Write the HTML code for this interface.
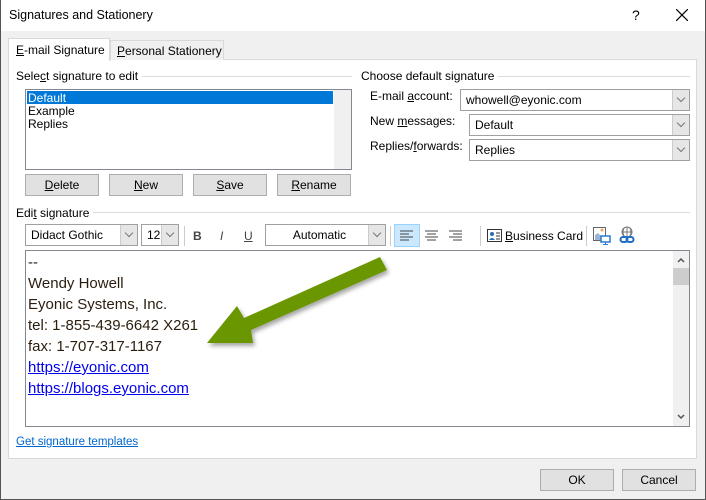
<!DOCTYPE html>
<html><head><meta charset="utf-8"><style>
*{box-sizing:border-box;margin:0;padding:0}
body{width:706px;height:500px;overflow:hidden;background:#f0f0f0;font-family:"Liberation Sans",sans-serif;font-size:12px;color:#000;position:relative}
.a{position:absolute}
.win{left:0;top:0;width:706px;height:500px;border:1px solid #555;border-top:none}
.title{left:1px;top:0;width:704px;height:31px;background:#fff}
.panel{left:8px;top:59px;width:689px;height:400px;background:#fff;border:1px solid #d9d9d9}
.btn{background:#e1e1e1;border:1px solid #adadad;text-align:center;line-height:20px;height:22px}
.grp{height:1px;background:#dcdcdc}
.dd{border:1px solid #a0a0a0;background:#fff;height:22px;line-height:20px;padding-left:5px}
.dd .ar{position:absolute;right:0;top:0;width:17px;height:20px;background:#e6e6e6;border-left:1px solid #ccc}
.dd .ar:after{content:"";position:absolute;left:5px;top:5px;width:5px;height:5px;border-right:1px solid #777;border-bottom:1px solid #777;transform:rotate(45deg)}
u{text-decoration:underline}
.sig{font-size:15px;color:#2b1d0e;line-height:21px}
.lk{color:#0000ee;text-decoration:underline}
</style></head><body>
<div class="a win"></div>
<div class="a title"></div>
<div class="a" style="left:9px;top:8px;font-size:12.5px">Signatures and Stationery</div>
<div class="a" style="left:632px;top:7px;font-size:14px">?</div>
<svg class="a" style="left:676px;top:9px" width="12" height="12"><path d="M0 0L12 12M12 0L0 12" stroke="#000" stroke-width="1.2"/></svg>

<div class="a panel"></div>
<div class="a" style="left:8px;top:38px;width:102px;height:23px;background:#fff;border:1px solid #d9d9d9;border-bottom:none"></div>
<div class="a" style="left:16px;top:43px"><u>E</u>-mail Signature</div>
<div class="a" style="left:110px;top:40px;width:114px;height:20px;background:#f0f0f0;border:1px solid #d9d9d9;border-bottom:none"></div>
<div class="a" style="left:117px;top:44px"><u>P</u>ersonal Stationery</div>

<div class="a" style="left:16px;top:69px">Sele<u>c</u>t signature to edit</div>
<div class="a grp" style="left:142px;top:76px;width:210px"></div>
<div class="a" style="left:25px;top:89px;width:327px;height:81px;border:1px solid #828790;background:#fff"></div>
<div class="a" style="left:27px;top:91px;width:306px;height:13px;background:#0078d7"></div>
<div class="a" style="left:28px;top:91px;color:#fff">Default</div>
<div class="a" style="left:28px;top:104px">Example</div>
<div class="a" style="left:28px;top:117px">Replies</div>
<div class="a" style="left:334px;top:90px;width:17px;height:79px;background:#f0f0f0"></div>
<div class="a btn" style="left:25px;top:174px;width:74px"><u>D</u>elete</div>
<div class="a btn" style="left:109px;top:174px;width:74px"><u>N</u>ew</div>
<div class="a btn" style="left:193px;top:174px;width:74px"><u>S</u>ave</div>
<div class="a btn" style="left:277px;top:174px;width:74px"><u>R</u>ename</div>

<div class="a" style="left:361px;top:69px">Choose default signature</div>
<div class="a grp" style="left:498px;top:76px;width:192px"></div>
<div class="a" style="left:370px;top:89px">E-mail <u>a</u>ccount:</div>
<div class="a dd" style="left:460px;top:89px;width:230px">whowell@eyonic.com<span class="ar"></span></div>
<div class="a" style="left:370px;top:114px">New <u>m</u>essages:</div>
<div class="a dd" style="left:469px;top:114px;width:221px">Default<span class="ar"></span></div>
<div class="a" style="left:370px;top:139px">Replies/<u>f</u>orwards:</div>
<div class="a dd" style="left:469px;top:139px;width:221px">Replies<span class="ar"></span></div>

<div class="a" style="left:16px;top:206px">Edi<u>t</u> signature</div>
<div class="a grp" style="left:93px;top:212px;width:597px"></div>
<div class="a dd" style="left:25px;top:224px;width:113px">Didact Gothic<span class="ar"></span></div>
<div class="a dd" style="left:141px;top:224px;width:38px">12<span class="ar"></span></div>
<div class="a" style="left:184px;top:226px;width:1px;height:20px;background:#ccc"></div>
<div class="a" style="left:193px;top:229px;font-weight:bold;color:#444">B</div>
<div class="a" style="left:220px;top:229px;font-style:italic;color:#444">I</div>
<div class="a" style="left:244px;top:229px;color:#444"><u>U</u></div>
<div class="a dd" style="left:265px;top:224px;width:121px;text-align:center;padding-right:17px">Automatic<span class="ar"></span></div>
<div class="a" style="left:390px;top:226px;width:1px;height:20px;background:#ccc"></div>
<div class="a" style="left:394px;top:224px;width:26px;height:23px;background:#cce8ff;border:1px solid #99d1ff"></div>
<svg class="a" style="left:396px;top:228px" width="80" height="16"><g stroke="#444" stroke-width="1"><path d="M4 3h13M4 6h9M4 9h13M4 12h9"/><path d="M29 3h13M31 6h9M29 9h13M31 12h9"/><path d="M53 3h13M57 6h9M53 9h13M57 12h9"/></g></svg>
<div class="a" style="left:480px;top:226px;width:1px;height:20px;background:#ccc"></div>
<svg class="a" style="left:487px;top:229px" width="16" height="14"><rect x="0.5" y="0.5" width="14" height="12" fill="#fff" stroke="#333"/><circle cx="5" cy="5" r="2" fill="#2a6db5"/><path d="M2 11q3-4 6 0" fill="#2a6db5"/><path d="M9 4h4M9 7h4M9 10h4" stroke="#333"/></svg>
<div class="a" style="left:505px;top:229px"><u>B</u>usiness Card</div>
<div class="a" style="left:586px;top:226px;width:1px;height:20px;background:#ccc"></div>
<svg class="a" style="left:593px;top:227px" width="18" height="18"><rect x="0.5" y="0.5" width="12" height="13" fill="#fff" stroke="#666"/><circle cx="9" cy="3" r="1.5" fill="#f5a25d"/><path d="M2 13v-5l3-2 3 3v4z" fill="#9bb4d6"/><rect x="8" y="9" width="9" height="6" fill="#fff" stroke="#2a7bd1" stroke-width="1.5"/><path d="M12.5 15v2M10 17.5h5" stroke="#2a7bd1"/></svg>
<svg class="a" style="left:619px;top:226px" width="18" height="19"><circle cx="8" cy="6" r="5" fill="none" stroke="#777"/><path d="M3 6h10M8 1v10M5 2q-2 4 0 8M11 2q2 4 0 8" stroke="#777" fill="none"/><rect x="1.5" y="11" width="7" height="5" rx="2.5" fill="none" stroke="#1e6fc4" stroke-width="2"/><rect x="7.5" y="11" width="7" height="5" rx="2.5" fill="none" stroke="#1e6fc4" stroke-width="2"/></svg>

<div class="a" style="left:25px;top:250px;width:665px;height:177px;border:1px solid #828790;background:#fff"></div>
<div class="a" style="left:673px;top:251px;width:16px;height:175px;background:#f0f0f0"></div>
<div class="a" style="left:673px;top:268px;width:16px;height:17px;background:#cdcdcd"></div>
<svg class="a" style="left:673px;top:251px" width="16" height="175"><path d="M5 11l3-3 3 3M5 164l3 3 3-3" stroke="#555" stroke-width="1.5" fill="none"/></svg>
<div class="a sig" style="left:28px;top:252px">--<br>Wendy Howell<br>Eyonic Systems, Inc.<br>tel: 1-855-439-6642 X261<br>fax: 1-707-317-1167<br><span class="lk">https://eyonic.com</span><br><span class="lk">https://blogs.eyonic.com</span></div>

<svg class="a" style="left:0;top:0" width="706" height="500"><defs><filter id="s"><feDropShadow dx="2" dy="3" stdDeviation="2" flood-opacity="0.35"/></filter></defs>
<polygon filter="url(#s)" fill="#6a9600" points="380,257 387,270 251,330 253,343 207,343 237,306 244,318"/></svg>

<div class="a" style="left:16px;top:436px;color:#0066cc;font-size:11.5px;text-decoration:underline">Get signature templates</div>
<div class="a btn" style="left:540px;top:469px;width:74px">OK</div>
<div class="a btn" style="left:622px;top:469px;width:74px">Cancel</div>
</body></html>
